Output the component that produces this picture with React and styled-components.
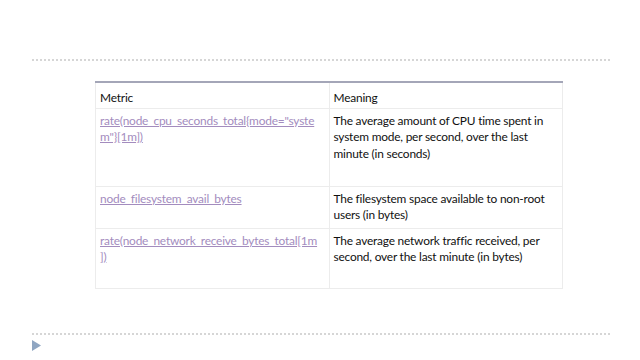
import styled, { createGlobalStyle } from 'styled-components';

const Global = createGlobalStyle`
  html, body {
    margin: 0;
    padding: 0;
    background: #ffffff;
  }
  body {
    font-family: Lato, "Open Sans", "Liberation Sans", sans-serif;
    color: #111;
  }
`;

const rows = [
  {
    metric: 'rate(node_cpu_seconds_total{mode="system"}[1m])',
    meaning: 'The average amount of CPU time spent in system mode, per second, over the last minute (in seconds)',
    height: 78,
  },
  {
    metric: 'node_filesystem_avail_bytes',
    meaning: 'The filesystem space available to non-root users (in bytes)',
    height: 42,
  },
  {
    metric: 'rate(node_network_receive_bytes_total[1m])',
    meaning: 'The average network traffic received, per second, over the last minute (in bytes)',
    height: 60,
  },
];

const App = () => {
  return (
    <Slide>
      <Global />
      <Rule />
      <Body>
        <Table>
          <thead>
            <tr>
              <Head>Metric</Head>
              <Head>Meaning</Head>
            </tr>
          </thead>
          <tbody>
            {rows.map((r) => (
              <Row key={r.metric} $h={r.height}>
                <MetricCell>
                  <MetricLink href="#">{r.metric}</MetricLink>
                </MetricCell>
                <Cell>{r.meaning}</Cell>
              </Row>
            ))}
          </tbody>
        </Table>
      </Body>
      <Rule />
      <Footer>
        <svg width="9" height="11" viewBox="0 0 9 11">
          <polygon points="0,0 9,5.5 0,11" fill="#8fa6c2" />
        </svg>
      </Footer>
    </Slide>
  );
};

const Slide = styled.div`
  width: 640px;
  height: 360px;
  box-sizing: border-box;
  padding-top: 59px;
  display: flex;
  flex-direction: column;
  overflow: hidden;
`;

const Rule = styled.div`
  height: 2px;
  margin: 0 29px 0 32px;
  background-image: linear-gradient(to right, #d6d6d6 2px, transparent 2px);
  background-size: 4px 2px;
  background-repeat: repeat-x;
`;

const Body = styled.div`
  height: 272px;
  padding-top: 20px;
  box-sizing: border-box;
  padding-left: 95px;
`;

const Table = styled.table`
  width: 468px;
  border-collapse: collapse;
  border-top: 2px solid #a4a6b8;
  font-size: 11.9px;
  letter-spacing: -0.2px;
  line-height: 16.5px;
  table-layout: fixed;
`;

const Head = styled.th`
  width: 50%;
  height: 26px;
  box-sizing: border-box;
  text-align: left;
  font-weight: normal;
  padding: 5px 4px 0;
  border: 1px solid #ececec;
  border-top: none;
  vertical-align: middle;
`;

const Row = styled.tr`
  height: ${(p) => p.$h}px;
`;

const Cell = styled.td`
  vertical-align: top;
  padding: 4px 4px 0;
  border: 1px solid #ececec;
`;

const MetricCell = styled(Cell)`
  padding-right: 10px;
  overflow-wrap: anywhere;
`;

const MetricLink = styled.a`
  color: #a38cbe;
  text-decoration: underline;
`;

const Footer = styled.div`
  padding: 5px 0 0 32px;
  display: flex;
`;

export default App;
